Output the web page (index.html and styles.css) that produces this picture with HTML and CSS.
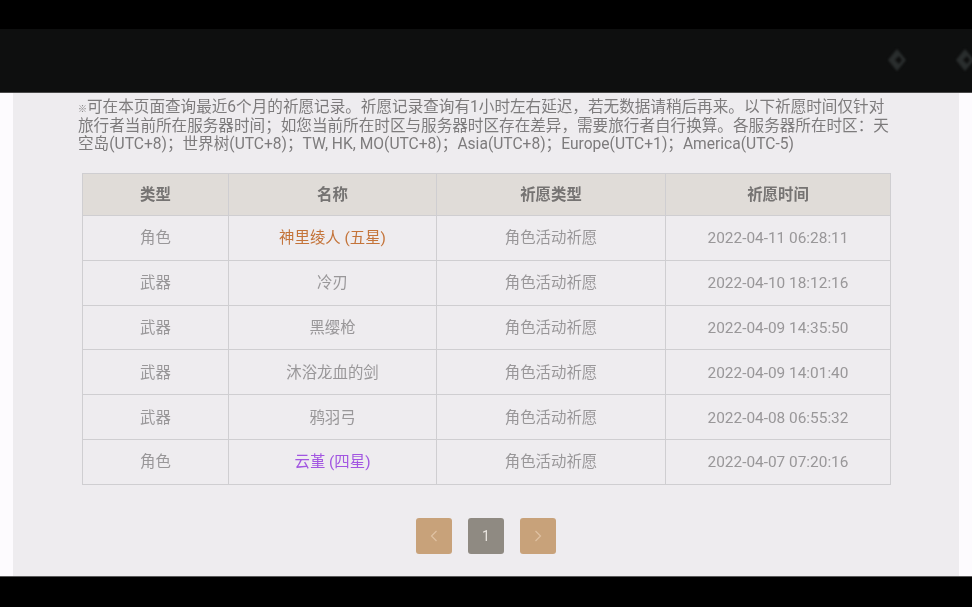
FILE: index.html
```html
<!DOCTYPE html>
<html lang="zh-CN">
<head>
  <meta charset="UTF-8" />
  <title>祈愿记录</title>
  <link rel="stylesheet" href="styles.css">
</head>
<body>
  <div class="top-bar"></div>

  <div class="header">
    <svg class="deco" viewBox="0 0 20 24"><path d="M10 1 L19 12 L10 23 L1 12 Z M12 8 L8 12 L12 16 L15 12 Z" fill-rule="evenodd"/></svg>
    <svg class="deco" viewBox="0 0 20 24"><path d="M10 1 L19 12 L10 23 L1 12 Z M12 8 L8 12 L12 16 L15 12 Z" fill-rule="evenodd"/></svg>
  </div>

  <div class="sheet">
    <div class="page">
      <p class="notice"><span class="mark">※</span><span>可在本页面查询最近6个月的祈愿记录。祈愿记录查询有1小时左右延迟，若无数据请稍后再来。以下祈愿时间仅针对旅行者当前所在服务器时间；如您当前所在时区与服务器时区存在差异，需要旅行者自行换算。各服务器所在时区：天空岛(UTC+8)；世界树(UTC+8)；TW, HK, MO(UTC+8)；Asia(UTC+8)；Europe(UTC+1)；America(UTC-5)</span></p>

      <table class="records">
        <thead>
          <tr><th class="col-type">类型</th><th class="col-name">名称</th><th class="col-wish">祈愿类型</th><th>祈愿时间</th></tr>
        </thead>
        <tbody>
          <tr><td>角色</td><td class="five-star">神里绫人 (五星)</td><td>角色活动祈愿</td><td>2022-04-11 06:28:11</td></tr>
          <tr><td>武器</td><td>冷刃</td><td>角色活动祈愿</td><td>2022-04-10 18:12:16</td></tr>
          <tr><td>武器</td><td>黑缨枪</td><td>角色活动祈愿</td><td>2022-04-09 14:35:50</td></tr>
          <tr><td>武器</td><td>沐浴龙血的剑</td><td>角色活动祈愿</td><td>2022-04-09 14:01:40</td></tr>
          <tr><td>武器</td><td>鸦羽弓</td><td>角色活动祈愿</td><td>2022-04-08 06:55:32</td></tr>
          <tr><td>角色</td><td class="four-star">云堇 (四星)</td><td>角色活动祈愿</td><td>2022-04-07 07:20:16</td></tr>
        </tbody>
      </table>

      <div class="pager">
        <div class="page-btn"><svg viewBox="0 0 12 16"><path d="M8.5 3 L3.5 8 L8.5 13"/></svg></div>
        <div class="page-btn current">1</div>
        <div class="page-btn"><svg viewBox="0 0 12 16"><path d="M3.5 3 L8.5 8 L3.5 13"/></svg></div>
      </div>
    </div>
  </div>

  <div class="bottom-bar"></div>
</body>
</html>
```

FILE: styles.css
```css
html, body {
  margin: 0;
  height: 607px;
  overflow: hidden;
}
body {
  background: #000;
  font-family: Roboto, "Noto Sans CJK SC", sans-serif;
  display: flex;
  flex-direction: column;
}
.top-bar {
  height: 29px;
  background: #000;
}
.header {
  height: 64px;
  box-sizing: border-box;
  background: #0e0f0f;
  border-bottom: 1px solid #4a4a4a;
  display: flex;
  justify-content: flex-end;
  align-items: center;
  gap: 48px;
  margin-right: -4px;
  padding: 0 1px 2px 0;
}
.deco {
  width: 20px;
  height: 24px;
  fill: #2a2e2e;
  filter: blur(1px);
}
.sheet {
  height: 484px;
  box-sizing: border-box;
  background: #fdfbfe;
  padding: 0 13px;
  border-bottom: 1px solid #5a5a5a;
}
.page {
  height: 100%;
  box-sizing: border-box;
  background: #eeecef;
  padding: 6px 67px 0 65px;
  filter: blur(0.4px);
}
.notice {
  margin: 0;
  font-size: 15.6px;
  line-height: 17.4px;
  color: #7d7b7c;
  height: 52px;
}
.notice .mark {
  font-size: 9px;
}
.records {
  width: 809px;
  margin: 22px 0 0 4px;
  border-collapse: collapse;
  font-size: 15.4px;
  line-height: 20px;
  color: #999799;
  table-layout: fixed;
}
.records th, .records td {
  box-sizing: border-box;
  border: 1.5px solid #cfced1;
  text-align: center;
  padding: 1px 0 0;
  font-weight: normal;
}
.records th {
  height: 42px;
  background: #e0dcd8;
  color: #757372;
  font-weight: bold;
}
.records td {
  height: 44.8px;
}
.col-type { width: 146px; }
.col-name { width: 208px; }
.col-wish { width: 229px; }
.records .five-star { color: #c4743a; }
.records .four-star { color: #a256e1; }
.pager {
  display: flex;
  justify-content: center;
  gap: 16px;
  margin: 33px 0 0 2px;
}
.page-btn {
  width: 36px;
  height: 36px;
  border-radius: 3px;
  background: #c8a27a;
  color: #e9e5df;
  font-size: 14px;
  display: flex;
  align-items: center;
  justify-content: center;
}
.page-btn.current {
  background: #8f8a82;
}
.page-btn svg {
  width: 12px;
  height: 16px;
  fill: none;
  stroke: #dfc1a2;
  stroke-width: 1.2;
}
.bottom-bar {
  flex: 1;
  background: #000;
}
```
